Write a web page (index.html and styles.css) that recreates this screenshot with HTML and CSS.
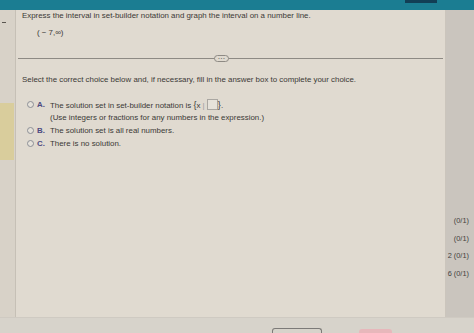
FILE: index.html
```html
<!DOCTYPE html>
<html>
<head>
<meta charset="utf-8">
<link rel="stylesheet" href="styles.css">
</head>
<body>
<div class="topbar"><div class="topblock"></div></div>
<div class="main">
  <div class="leftstrip">
    <div class="dash"></div>
    <div class="hilite"></div>
  </div>
  <div class="panel">
    <p class="title">Express the interval in set-builder notation and graph the interval on a number line.</p>
    <p class="interval">( − 7,∞)</p>
    <div class="divider"><span class="pill">• • •</span></div>
    <p class="select">Select the correct choice below and, if necessary, fill in the answer box to complete your choice.</p>
    <div class="opt first">
      <span class="radio"></span><span class="letter">A.</span>
      <div class="otext">The solution set in set-builder notation is <span class="brace">{</span>x <span class="bar">|</span> <span class="box"></span><span class="brace">}</span>.<br>(Use integers or fractions for any numbers in the expression.)</div>
    </div>
    <div class="opt">
      <span class="radio"></span><span class="letter">B.</span>
      <div class="otext">The solution set is all real numbers.</div>
    </div>
    <div class="opt">
      <span class="radio"></span><span class="letter">C.</span>
      <div class="otext">There is no solution.</div>
    </div>
  </div>
  <div class="rightstrip">
    <div class="score">(0/1)</div>
    <div class="score">(0/1)</div>
    <div class="score">2 (0/1)</div>
    <div class="score">6 (0/1)</div>
  </div>
</div>
<div class="bottombar">
  <div class="btn outline"></div>
  <div class="btn pink"></div>
</div>
</body>
</html>
```
FILE: styles.css
```css
html, body { margin: 0; padding: 0; }
body {
  width: 474px; height: 333px; overflow: hidden;
  background: #d4cfc7;
  font-family: "Liberation Sans", Arial, sans-serif;
  color: #3b3936;
}
.topbar {
  height: 10px; background: #1b7d92;
  display: flex; justify-content: flex-end; padding-right: 37px;
}
.topblock { width: 32px; height: 3px; background: #123e55; }
.main { display: flex; height: 307px; }
.leftstrip {
  width: 15px; background: #d8d2c8; border-right: 1px solid #c6c0b6;
  display: flex; flex-direction: column; flex-shrink: 0;
}
.dash { width: 4px; height: 1px; background: #5a5650; margin: 12px 0 0 2px; }
.hilite { width: 14px; height: 57px; background: #d9cd9c; margin-top: 80px; }
.panel {
  width: 430px; flex-shrink: 0; background: #e0dad0; padding: 1px 0 0 5px; box-sizing: border-box;
  border-right: 1px solid #cbc5bc;
}
p { margin: 0; }
.title { font-size: 7.9px; line-height: 10px; padding-left: 1px; }
.interval { font-size: 7.9px; line-height: 10px; margin: 7px 0 0 16px; }
.divider {
  height: 1px; background: #8e8a84; margin: 20px 2px 0 -3px;
  display: flex; justify-content: center; align-items: center;
}
.pill {
  font-size: 4px; color: #6d6a66; border: 1px solid #8e8a84; border-radius: 4px;
  background: #e0dad0; padding: 0 3px; height: 5px; line-height: 5px; margin-left: -18px;
}
.select { font-size: 7.9px; line-height: 10px; margin: 16px 0 0 1px; }
.opt { display: flex; align-items: flex-start; font-size: 7.9px; margin-left: 6px; }
.opt.first { margin-top: 14px; }
.opt + .opt { margin-top: 1px; }
.radio {
  width: 7px; height: 7px; border: 1px solid #8c8f96; border-radius: 50%;
  box-sizing: border-box; background: #e6e2da; margin-top: 2px; flex-shrink: 0;
}
.letter { color: #4c4a80; font-weight: bold; width: 13px; margin-left: 3px; flex-shrink: 0; line-height: 11px; }
.otext { line-height: 12px; margin-top: 0; }
.brace { font-size: 9px; }
.bar { color: #999; }
.box {
  display: inline-block; width: 9px; height: 9px; border: 1px solid #aaa7a2;
  vertical-align: -2px; background: #e6e2da;
}
.rightstrip {
  flex: 1; background: #cac5be; display: flex; flex-direction: column;
  align-items: flex-end; padding: 206px 5px 0 0; font-size: 7.4px; color: #44423f;
  white-space: nowrap;
}
.score { height: 17.5px; }
.bottombar {
  height: 15px; background: #d7d3cb; display: flex; align-items: flex-end;
  padding-left: 272px; gap: 37px; border-top: 1px solid #cfcac2;
}
.btn { width: 48px; height: 4px; border-radius: 3px 3px 0 0; }
.outline { border: 1px solid #7c7a78; border-bottom: none; }
.pink { width: 33px; background: #e7b7bb; }
```
